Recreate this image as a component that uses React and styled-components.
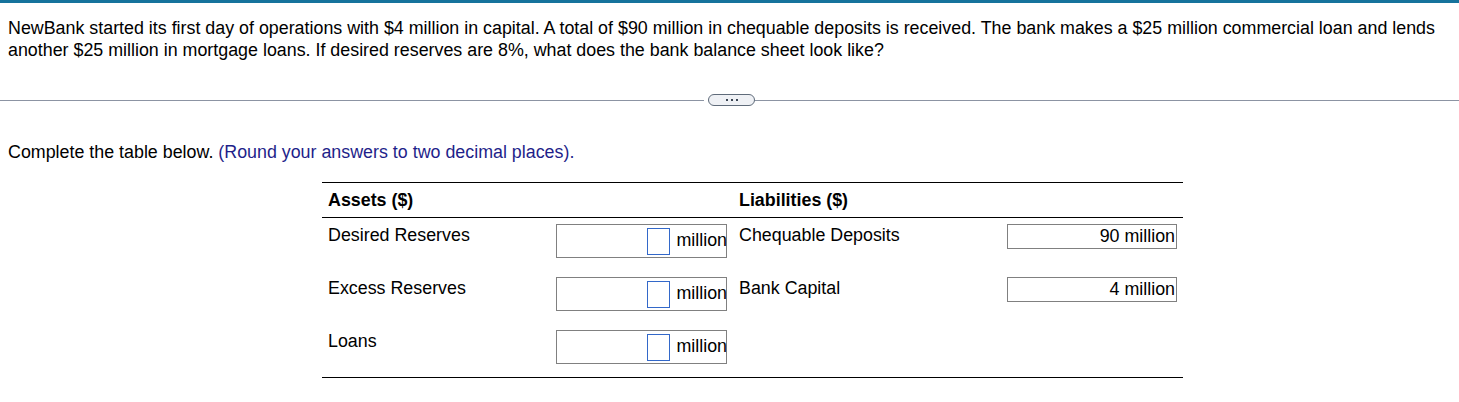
import styled, { createGlobalStyle } from "styled-components";

const Global = createGlobalStyle`
  body {
    margin: 0;
    background: #fff;
    font-family: "Liberation Sans", Arial, sans-serif;
    color: #000;
  }
`;

const TopBar = styled.div`
  height: 3px;
  background: #16739c;
`;

const Question = styled.p`
  margin: 14px 8px 0;
  font-size: 17.85px;
  line-height: 22px;
`;

const Divider = styled.div`
  display: flex;
  align-items: center;
  margin-top: 33px;
  height: 12px;
`;

const Rule = styled.div`
  flex: 1;
  height: 1px;
  background: #8c94a3;
`;

const Pill = styled.div`
  width: 45px;
  height: 10px;
  margin-left: 4px;
  border: 1px solid #5f6b7a;
  border-radius: 6px;
  background: #eff1f5;
  display: flex;
  align-items: center;
  justify-content: center;
  gap: 3px;
`;

const Dot = styled.span`
  width: 2px;
  height: 2px;
  background: #3c4654;
`;

const Instruction = styled.p`
  margin: 35px 8px 0;
  font-size: 17.85px;
  line-height: 22px;
`;

const Hint = styled.span`
  color: #1f1f8a;
`;

const Sheet = styled.div`
  margin: 19px 0 0 322px;
  width: 861px;
  display: grid;
  grid-template-columns: 234px 177px 274px 176px;
  border-top: 1px solid #000;
  border-bottom: 1px solid #000;
`;

const Head = styled.div`
  height: 34px;
  display: flex;
  align-items: center;
  padding-left: 6px;
  font-weight: bold;
  font-size: 17.85px;
  border-bottom: 1px solid #000;
`;

const Cell = styled.div`
  height: 53px;
  padding: 6px 0 0 6px;
  box-sizing: border-box;
  font-size: 17.85px;
  line-height: 22px;
`;

const InputCell = styled.div`
  height: 53px;
  padding-top: 6px;
  box-sizing: border-box;
`;

const AnswerBox = styled.div`
  width: 171px;
  height: 34px;
  box-sizing: border-box;
  border: 1px solid #808080;
  display: flex;
  align-items: center;
  justify-content: flex-end;
  gap: 6px;
  font-size: 17.85px;
`;

const Blank = styled.span`
  width: 23px;
  height: 27px;
  box-sizing: border-box;
  border: 1px solid #3368c9;
`;

const Unit = styled.span`
  margin-right: -1px;
  line-height: 1;
`;

const GivenBox = styled.div`
  width: 170px;
  height: 25px;
  box-sizing: border-box;
  border: 1px solid #808080;
  display: flex;
  align-items: center;
  justify-content: flex-end;
  padding-right: 1px;
  font-size: 17.85px;
`;

const rows = [
  { asset: "Desired Reserves", liability: "Chequable Deposits", value: "90 million" },
  { asset: "Excess Reserves", liability: "Bank Capital", value: "4 million" },
  { asset: "Loans" },
];

export default function App() {
  return (
    <>
      <Global />
      <TopBar />
      <Question>
        NewBank started its first day of operations with $4 million in capital. A total of $90 million in chequable
        deposits is received. The bank makes a $25 million commercial loan and lends another $25 million in mortgage
        loans. If desired reserves are 8%, what does the bank balance sheet look like?
      </Question>
      <Divider>
        <Rule />
        <Pill>
          <Dot />
          <Dot />
          <Dot />
        </Pill>
        <Rule />
      </Divider>
      <Instruction>
        Complete the table below. <Hint>(Round your answers to two decimal places).</Hint>
      </Instruction>
      <Sheet>
        <Head>Assets ($)</Head>
        <Head />
        <Head>Liabilities ($)</Head>
        <Head />
        {rows.map((r, i) => [
          <Cell key={`a${i}`}>{r.asset}</Cell>,
          <InputCell key={`b${i}`}>
            <AnswerBox>
              <Blank />
              <Unit>million</Unit>
            </AnswerBox>
          </InputCell>,
          <Cell key={`c${i}`}>{r.liability}</Cell>,
          <InputCell key={`d${i}`}>
            {r.value && <GivenBox>{r.value}</GivenBox>}
          </InputCell>,
        ])}
      </Sheet>
    </>
  );
}
